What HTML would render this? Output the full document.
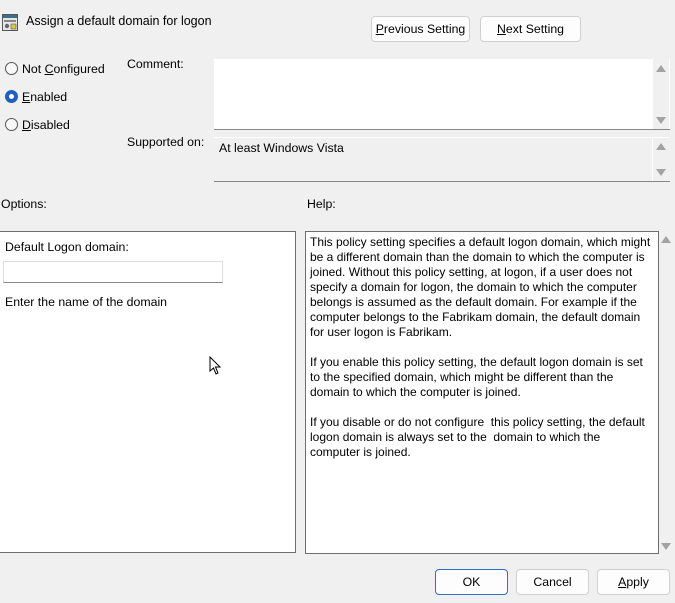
<!DOCTYPE html>
<html><head><style>
body{margin:0;width:675px;height:603px;background:#f0f0f0;font-family:"Liberation Sans",sans-serif;font-size:12.3px;color:#000;position:relative;overflow:hidden}
.a{position:absolute;white-space:nowrap}
.btn{position:absolute;background:#fdfdfd;border:1px solid #d0d0d0;border-radius:4px;text-align:center;box-sizing:border-box;line-height:25px}
.rad{position:absolute;width:13px;height:13px;border:1px solid #555;border-radius:50%;box-sizing:border-box;background:#f8f8f8}
.sb{position:absolute;width:0;height:0;border-left:5px solid transparent;border-right:5px solid transparent}
.up{border-bottom:7px solid #a3a3a3}
.dn{border-top:7px solid #a3a3a3}
u{text-decoration:underline}
</style></head><body>
<svg class="a" style="left:2px;top:14px" width="16" height="17" viewBox="0 0 16 17">
<rect x="0.5" y="0.5" width="15" height="16" fill="#e8e8e8" stroke="#555"/>
<rect x="1" y="1" width="14" height="3" fill="#3c6f8a"/>
<rect x="2" y="6" width="12" height="2" fill="#888"/>
<circle cx="5" cy="12" r="2.2" fill="#666"/>
<rect x="9" y="10" width="5" height="5" fill="#d8c84a" stroke="#555" stroke-width="0.6"/>
</svg>
<div class="a" style="left:26px;top:14px;font-size:12.5px">Assign a default domain for logon</div>
<div class="btn" style="left:371px;top:16px;width:99px;height:26px"><u>P</u>revious Setting</div>
<div class="btn" style="left:480px;top:16px;width:101px;height:26px"><u>N</u>ext Setting</div>

<div class="rad" style="left:5px;top:62px"></div>
<div class="a" style="left:22px;top:62px">Not <u>C</u>onfigured</div>
<div class="rad" style="left:5px;top:90px;border:4px solid #1f5fbf;background:#fff"></div>
<div class="a" style="left:22px;top:90px"><u>E</u>nabled</div>
<div class="rad" style="left:5px;top:118px"></div>
<div class="a" style="left:22px;top:118px"><u>D</u>isabled</div>

<div class="a" style="left:127px;top:57px">Comment:</div>
<div class="a" style="left:214px;top:59px;width:456px;height:70px;background:#fff;border-bottom:1px solid #888"></div>
<div class="a" style="left:653px;top:59px;width:16px;height:70px;background:#f0f0f0"></div>
<div class="sb up" style="left:656px;top:65px"></div>
<div class="sb dn" style="left:656px;top:117px"></div>

<div class="a" style="left:127px;top:135px">Supported on:</div>
<div class="a" style="left:214px;top:137px;border-top:1px solid #fff;border-bottom:1px solid #888;box-sizing:border-box;width:456px;height:45px"></div>
<div class="a" style="left:652px;top:137px;width:1px;height:44px;background:#fff"></div>
<div class="a" style="left:219px;top:141px">At least Windows Vista</div>
<div class="sb up" style="left:656px;top:143px"></div>
<div class="sb dn" style="left:656px;top:169px"></div>

<div class="a" style="left:1px;top:197px">Options:</div>
<div class="a" style="left:307px;top:197px">Help:</div>

<div class="a" style="left:-1px;top:231px;width:297px;height:322px;background:#fff;border:1px solid #6e6e6e;box-sizing:border-box"></div>
<div class="a" style="left:5px;top:240px">Default Logon domain:</div>
<div class="a" style="left:3px;top:261px;width:220px;height:22px;background:#fff;border:1px solid #ddd;border-bottom:1px solid #888;box-sizing:border-box"></div>
<div class="a" style="left:5px;top:295px">Enter the name of the domain</div>
<svg class="a" style="left:209px;top:356px" width="14" height="20" viewBox="0 0 14 20"><path d="M1 1 L1 15 L4.5 12 L7 18 L9 17 L6.5 11 L11 11 Z" fill="#fff" stroke="#000" stroke-width="1"/></svg>

<div class="a" style="left:305px;top:231px;width:354px;height:323px;background:#fff;border:1px solid #6e6e6e;box-sizing:border-box"></div>
<div class="a" style="left:310px;top:235px;line-height:15px;font-size:12px">This policy setting specifies a default logon domain, which might<br>be a different domain than the domain to which the computer is<br>joined. Without this policy setting, at logon, if a user does not<br>specify a domain for logon, the domain to which the computer<br>belongs is assumed as the default domain. For example if the<br>computer belongs to the Fabrikam domain, the default domain<br>for user logon is Fabrikam.<br><br>If you enable this policy setting, the default logon domain is set<br>to the specified domain, which might be different than the<br>domain to which the computer is joined.<br><br>If you disable or do not configure&nbsp; this policy setting, the default<br>logon domain is always set to the&nbsp; domain to which the<br>computer is joined.</div>
<div class="sb up" style="left:661px;top:236px"></div>
<div class="sb dn" style="left:661px;top:543px"></div>

<div class="btn" style="left:435px;top:569px;width:73px;height:26px;border-color:#2f6fcf">OK</div>
<div class="btn" style="left:516px;top:569px;width:73px;height:26px">Cancel</div>
<div class="btn" style="left:597px;top:569px;width:73px;height:26px"><u>A</u>pply</div>
</body></html>
